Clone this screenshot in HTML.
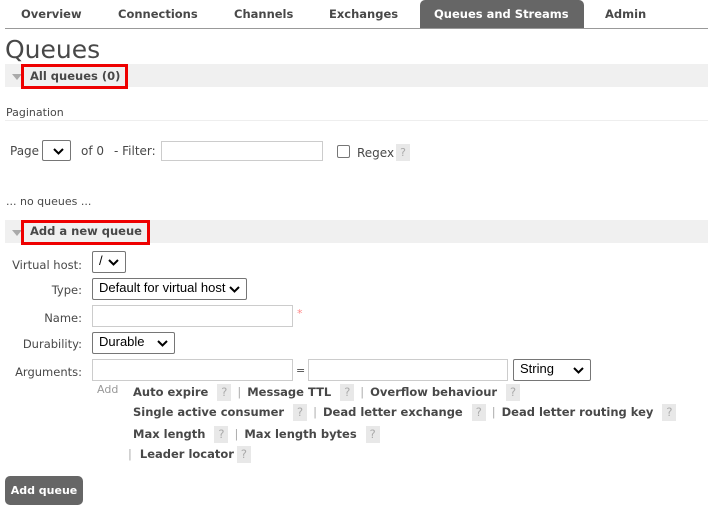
<!DOCTYPE html>
<html><head><meta charset="utf-8"><style>
*{margin:0;padding:0;box-sizing:border-box}
body{width:708px;height:510px;background:#fff;position:relative;overflow:hidden;font-family:"DejaVu Sans","Liberation Sans",sans-serif;font-size:11px;color:#484848}
.a{position:absolute;white-space:nowrap}
.nav{font-weight:bold;font-size:11.5px;color:#484848;top:7px}
.bar{position:absolute;left:5px;width:703px;height:23px;background:#f0f0f0}
.tri{position:absolute;left:12px;width:0;height:0;border-left:5px solid transparent;border-right:5px solid transparent;border-top:6px solid #aaa}
.red{position:absolute;border:3px solid #e00}
.h{font-weight:bold;font-size:11.5px;color:#484848}
.in{position:absolute;border:1px solid #ccc;background:#fff}
.sel{position:absolute;border:1px solid #767676;border-radius:2px;background:#fff;font-family:"Liberation Sans",sans-serif;font-size:13px;color:#000;padding:1px 6px}
.sel svg{position:absolute;right:6px;top:7px}
.q{display:inline-block;background:#e8e8e8;color:#aaa;width:14px;text-align:center;font-weight:normal;height:17px;line-height:17px;vertical-align:middle;margin-left:5px}
.lk{font-weight:bold;font-size:11.5px;color:#484848}
.sep{color:#aaa;font-weight:normal;margin:0 6px}
.lb{position:absolute;width:82px;text-align:right;left:0;font-size:11.5px}
</style></head><body>
<div class="a nav" style="left:21px">Overview</div>
<div class="a nav" style="left:118px">Connections</div>
<div class="a nav" style="left:234px">Channels</div>
<div class="a nav" style="left:329px">Exchanges</div>
<div class="a" style="left:420px;top:0;width:164px;height:29px;background:#666;border-radius:5px 5px 0 0"></div>
<div class="a nav" style="left:434px;color:#fff">Queues and Streams</div>
<div class="a nav" style="left:605px">Admin</div>
<div class="a" style="left:5px;top:28px;width:703px;height:1px;background:#999"></div>

<div class="a" style="left:5px;top:35px;font-size:25px;color:#484848">Queues</div>
<div class="bar" style="top:64px"></div>
<div class="tri" style="top:74px"></div>
<div class="red" style="left:21px;top:64px;width:107px;height:25px"></div>
<div class="a h" style="left:30px;top:69px">All queues (0)</div>

<div class="a" style="left:6px;top:106px">Pagination</div>
<div class="a" style="left:5px;top:120px;width:703px;height:1px;background:#eee"></div>
<div class="a" style="left:10px;top:144px;font-size:12px">Page</div>
<div class="sel" style="left:42px;top:140px;width:29px;height:21px"><svg width="11" height="7"><path d="M1 1l4.5 4.5L10 1" stroke="#000" stroke-width="2" fill="none"/></svg></div>
<div class="a" style="left:81px;top:144px;font-size:12px">of 0</div>
<div class="a" style="left:114px;top:144px;font-size:12px">- Filter:</div>
<div class="in" style="left:161px;top:141px;width:162px;height:20px"></div>
<div class="a" style="left:337px;top:145px;width:13px;height:13px;border:1px solid #767676;border-radius:2px"></div>
<div class="a" style="left:357px;top:146px;font-size:12px">Regex</div>
<div class="a q" style="left:396px;top:144px;margin:0">?</div>

<div class="a" style="left:6px;top:195px">... no queues ...</div>

<div class="bar" style="top:220px"></div>
<div class="tri" style="top:230px"></div>
<div class="red" style="left:21px;top:220px;width:129px;height:25px"></div>
<div class="a h" style="left:30px;top:224px">Add a new queue</div>

<div class="lb" style="top:258px">Virtual host:</div>
<div class="sel" style="left:92px;top:251px;width:34px;height:22px">/<svg width="11" height="7"><path d="M1 1l4.5 4.5L10 1" stroke="#000" stroke-width="2" fill="none"/></svg></div>
<div class="lb" style="top:283px">Type:</div>
<div class="sel" style="left:92px;top:278px;width:155px;height:22px">Default for virtual host<svg width="11" height="7"><path d="M1 1l4.5 4.5L10 1" stroke="#000" stroke-width="2" fill="none"/></svg></div>
<div class="lb" style="top:311px">Name:</div>
<div class="in" style="left:92px;top:305px;width:201px;height:22px"></div>
<div class="a" style="left:297px;top:307px;color:#f88;font-size:11px">*</div>
<div class="lb" style="top:337px">Durability:</div>
<div class="sel" style="left:92px;top:332px;width:83px;height:22px">Durable<svg width="11" height="7"><path d="M1 1l4.5 4.5L10 1" stroke="#000" stroke-width="2" fill="none"/></svg></div>
<div class="lb" style="top:365px">Arguments:</div>
<div class="in" style="left:92px;top:359px;width:201px;height:22px"></div>
<div class="a" style="left:296px;top:364px">=</div>
<div class="in" style="left:308px;top:359px;width:200px;height:22px"></div>
<div class="sel" style="left:513px;top:359px;width:78px;height:22px">String<svg width="11" height="7"><path d="M1 1l4.5 4.5L10 1" stroke="#000" stroke-width="2" fill="none"/></svg></div>
<div class="a" style="left:97px;top:383px;color:#999">Add</div>

<div class="a lk" style="left:133px;top:384px">Auto expire <span class="q">?</span><span class="sep">|</span>Message TTL <span class="q">?</span><span class="sep">|</span>Overflow behaviour <span class="q">?</span></div>
<div class="a lk" style="left:133px;top:404px">Single active consumer <span class="q">?</span><span class="sep">|</span>Dead letter exchange <span class="q">?</span><span class="sep">|</span>Dead letter routing key <span class="q">?</span></div>
<div class="a lk" style="left:133px;top:426px">Max length <span class="q">?</span><span class="sep">|</span>Max length bytes <span class="q">?</span></div>
<div class="a lk" style="left:128px;top:446px"><span class="sep" style="margin-left:0;margin-right:8px">|</span>Leader locator<span class="q" style="margin-left:3px">?</span></div>

<div class="a" style="left:5px;top:476px;width:78px;height:29px;background:#666;border-radius:5px;color:#fff;font-weight:bold;font-size:11px;text-align:center;line-height:29px">Add queue</div>
</body></html>
